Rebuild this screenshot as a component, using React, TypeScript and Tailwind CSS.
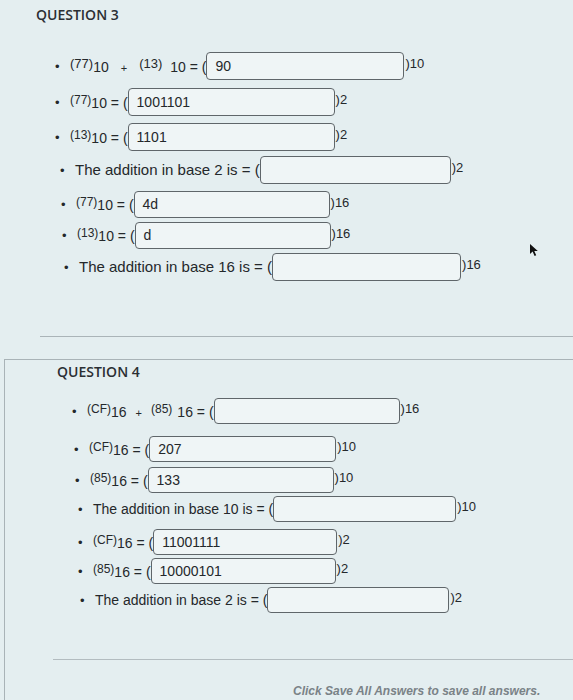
import type { ReactNode } from 'react';

type Row = {
  pre: ReactNode;
  suffix: string;
  indent: string;
  gap: string;
  box: string;
  value?: string;
};

const font = { fontFamily: '"Liberation Sans", Arial, sans-serif' };

function Base({ n, b }: { n: string; b: string }) {
  return (
    <>
      <span className="text-[12px] align-[4px]">({n})</span>
      <span>{b}</span>
    </>
  );
}

const q3: Row[] = [
  {
    pre: (
      <>
        <span className="text-[13px] align-[4px]">(77)</span>
        <span>10</span>
        <span className="mx-[12px] text-[11px]">+</span>
        <span className="text-[13px] align-[4px]">(13)</span>
        <span className="ml-[8px]">10 = (</span>
      </>
    ),
    suffix: ')10',
    indent: 'ml-[55px]',
    gap: 'mt-[27px]',
    box: 'w-[198px] h-[28px]',
    value: '90',
  },
  { pre: <><Base n="77" b="10" /> = (</>, suffix: ')2', indent: 'ml-[55px]', gap: 'mt-[8px]', box: 'w-[207px] h-[28px]', value: '1001101' },
  { pre: <><Base n="13" b="10" /> = (</>, suffix: ')2', indent: 'ml-[55px]', gap: 'mt-[7px]', box: 'w-[207px] h-[28px]', value: '1101' },
  { pre: <span className="text-[15px]">The addition in base 2 is = (</span>, suffix: ')2', indent: 'ml-[60px]', gap: 'mt-[5px]', box: 'w-[191px] h-[28px]' },
  { pre: <><Base n="77" b="10" /> = (</>, suffix: ')16', indent: 'ml-[61px]', gap: 'mt-[7px]', box: 'w-[196px] h-[27px]', value: '4d' },
  { pre: <><Base n="13" b="10" /> = (</>, suffix: ')16', indent: 'ml-[62px]', gap: 'mt-[4px]', box: 'w-[196px] h-[27px]', value: 'd' },
  { pre: <span className="text-[15px]">The addition in base 16 is = (</span>, suffix: ')16', indent: 'ml-[64px]', gap: 'mt-[4px]', box: 'w-[189px] h-[28px]' },
];

const q4: Row[] = [
  {
    pre: (
      <>
        <Base n="CF" b="16" />
        <span className="mx-[9px] text-[11px]">+</span>
        <span className="text-[12px] align-[4px]">(85)</span>
        <span className="ml-[5px]">16 = (</span>
      </>
    ),
    suffix: ')16',
    indent: 'ml-[67px]',
    gap: 'mt-[16px]',
    box: 'w-[186px] h-[26px]',
  },
  { pre: <><Base n="CF" b="16" /> = (</>, suffix: ')10', indent: 'ml-[69px]', gap: 'mt-[12px]', box: 'w-[187px] h-[26px]', value: '207' },
  { pre: <><Base n="85" b="16" /> = (</>, suffix: ')10', indent: 'ml-[70px]', gap: 'mt-[5px]', box: 'w-[186px] h-[26px]', value: '133' },
  { pre: <>The addition in base 10 is = (</>, suffix: ')10', indent: 'ml-[73px]', gap: 'mt-[3px]', box: 'w-[183px] h-[26px]' },
  { pre: <><Base n="CF" b="16" /> = (</>, suffix: ')2', indent: 'ml-[73px]', gap: 'mt-[7px]', box: 'w-[184px] h-[26px]', value: '11001111' },
  { pre: <><Base n="85" b="16" /> = (</>, suffix: ')2', indent: 'ml-[73px]', gap: 'mt-[3px]', box: 'w-[185px] h-[26px]', value: '10000101' },
  { pre: <>The addition in base 2 is = (</>, suffix: ')2', indent: 'ml-[75px]', gap: 'mt-[3px]', box: 'w-[182px] h-[26px]' },
];

function AnswerRow({ row }: { row: Row }) {
  return (
    <li className={`flex items-center text-[14px] text-[#24282b] ${row.indent} ${row.gap}`}>
      <span className="w-[15px] text-[13px] leading-none">•</span>
      <span className="whitespace-nowrap">{row.pre}</span>
      <div
        className={`flex items-center rounded-[4px] border border-[#5f666a] bg-white/40 pl-[8px] ${row.box}`}
      >
        {row.value}
      </div>
      <span className="ml-[1px] -mt-[4px] text-[13px]">{row.suffix}</span>
    </li>
  );
}

export default function App() {
  return (
    <div className="relative h-[700px] w-[573px] overflow-hidden bg-[#e4eef0]" style={font}>
      {/* Question 3 */}
      <section className="pt-[5px]">
        <h2
          className="ml-[36px] text-[14px] font-semibold leading-[20px] text-[#2b2f33]"
          style={{ fontFamily: '"Open Sans", sans-serif' }}
        >
          QUESTION 3
        </h2>
        <ul>
          {q3.map((row, i) => (
            <AnswerRow key={i} row={row} />
          ))}
        </ul>
        <div className="ml-[40px] mt-[55px] border-t border-[#aab4b8]" />
      </section>

      {/* Question 4 */}
      <section className="ml-[4px] mt-[22px] border-l border-t border-[#a9b3b7] pt-[2px]">
        <h2
          className="ml-[52px] text-[14px] font-semibold leading-[20px] text-[#2b2f33]"
          style={{ fontFamily: '"Open Sans", sans-serif' }}
        >
          QUESTION 4
        </h2>
        <ul>
          {q4.map((row, i) => (
            <AnswerRow key={i} row={row} />
          ))}
        </ul>
        <div className="ml-[48px] mt-[46px] border-t border-[#b3bcc0]" />
        <p className="ml-[288px] mt-[22px] whitespace-nowrap text-[12px] font-bold italic text-[#7a8287]">
          Click Save All Answers to save all answers.
        </p>
      </section>

      {/* mouse pointer */}
      <svg className="absolute left-[529px] top-[243px]" width="10" height="14" viewBox="0 0 10 14">
        <path d="M1 1 L1 11 L3.6 8.6 L5.6 13 L7.2 12.3 L5.3 8 L8.8 8 Z" fill="#111" />
      </svg>
    </div>
  );
}
